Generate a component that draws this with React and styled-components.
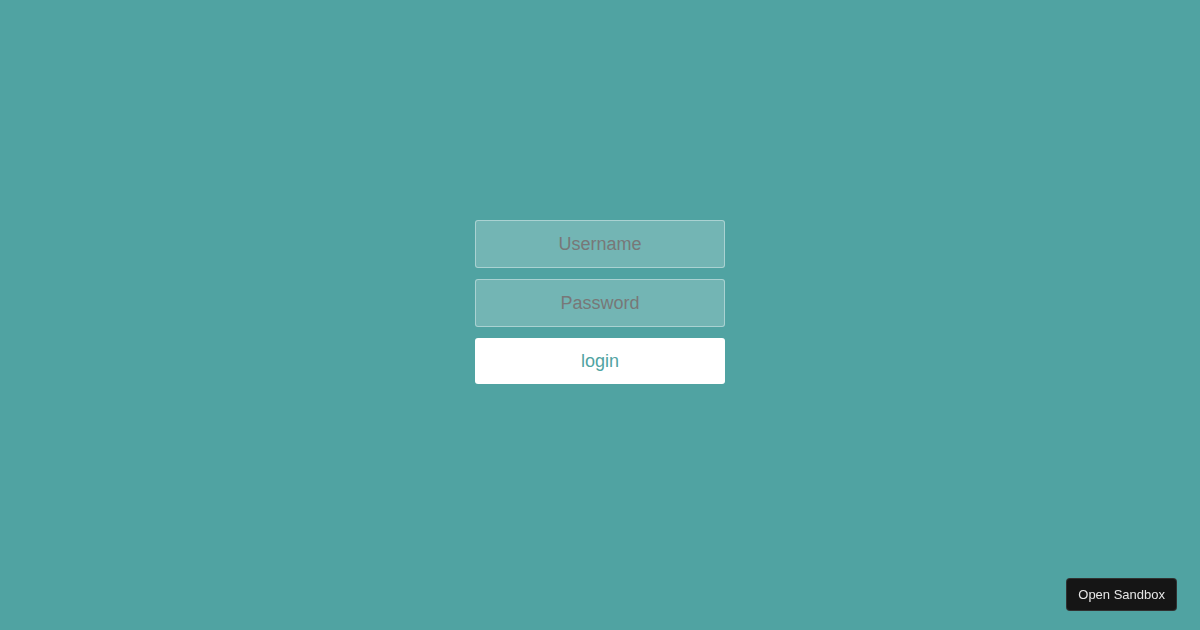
import React from "react"
import styled, { createGlobalStyle } from "styled-components"

const GlobalStyle = createGlobalStyle`
    html, body {
        margin: 0;
        padding: 0;
        height: 100%;
        background: #50a3a2;
        font-family: "Liberation Sans", Arial, sans-serif;
    }
`

const Wrapper = styled.div`
    width: 100%;
    height: 630px;
    display: flex;
    justify-content: center;
    padding-top: 220px;
    box-sizing: border-box;
`

const Form = styled.form`
    width: 250px;
    display: flex;
    flex-direction: column;
`

const Input = styled.input`
    box-sizing: border-box;
    width: 250px;
    height: 48px;
    margin: 0 0 11px;
    padding: 10px 15px;
    border: 1px solid rgba(255, 255, 255, 0.4);
    border-radius: 3px;
    background: rgba(255, 255, 255, 0.2);
    color: #fff;
    font-family: "Liberation Sans", Arial, sans-serif;
    font-size: 18px;
    text-align: center;
    outline: none;

    &::placeholder {
        color: #787878;
        opacity: 1;
    }
`

const Button = styled.button`
    box-sizing: border-box;
    width: 250px;
    height: 46px;
    padding: 10px 15px;
    border: 0;
    border-radius: 3px;
    background: #fff;
    color: #50a3a2;
    font-family: "Liberation Sans", Arial, sans-serif;
    font-size: 18px;
    cursor: pointer;
`

const SandboxLink = styled.a`
    position: fixed;
    right: 23px;
    bottom: 19px;
    display: flex;
    align-items: center;
    height: 33px;
    padding: 0 11px;
    box-sizing: border-box;
    background: #151515;
    border: 1px solid rgba(255, 255, 255, 0.12);
    border-radius: 4px;
    color: #e6e6e6;
    font-family: "Liberation Sans", Arial, sans-serif;
    font-size: 13px;
    text-decoration: none;
`

const App = () => {
    return (
        <>
            <GlobalStyle />
            <Wrapper>
                <Form onSubmit={e => e.preventDefault()}>
                    <Input type="text" placeholder="Username" />
                    <Input type="password" placeholder="Password" />
                    <Button type="submit">login</Button>
                </Form>
            </Wrapper>
            <SandboxLink href="#">Open Sandbox</SandboxLink>
        </>
    )
}

export default App
